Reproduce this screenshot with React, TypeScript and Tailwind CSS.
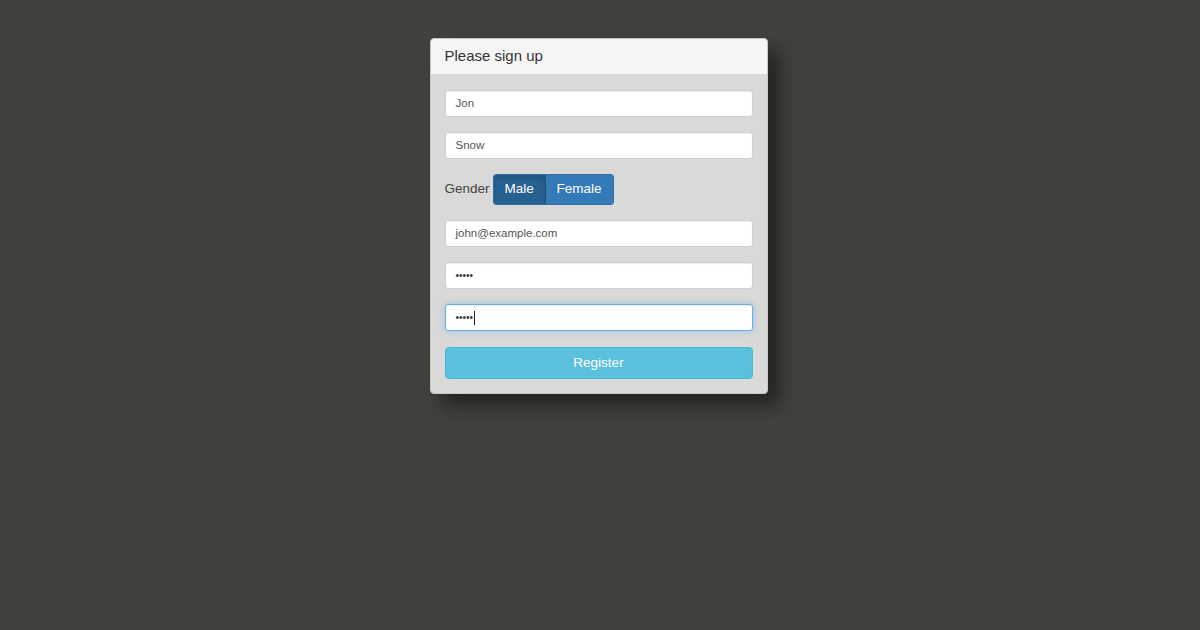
const Field = ({ value, focused, password }: { value: string; focused?: boolean; password?: boolean }) => (
  <div
    className={
      "h-[27px] rounded-[3px] bg-white flex items-center pl-[10px] text-[11.5px] text-[#555] border " +
      (focused
        ? "border-[#66afe9] shadow-[inset_0_1px_1px_rgba(0,0,0,0.075),0_0_6px_rgba(102,175,233,0.6)]"
        : "border-[#cfcfcf] shadow-[inset_0_1px_1px_rgba(0,0,0,0.075)]")
    }
  >
    {password ? (
      <span className="text-[#333] text-[10px] leading-none">{value}</span>
    ) : (
      <span>{value}</span>
    )}
    {focused && <span className="w-px h-[14px] bg-[#222] ml-[1px]" />}
  </div>
);

export default function App() {
  return (
    <div
      className="w-[1200px] h-[630px] bg-[#42413c] pt-[38px] flex justify-center items-start pr-[3px]"
      style={{ fontFamily: '"Liberation Sans", Arial, sans-serif' }}
    >
      <div className="w-[338px] rounded-[4px] bg-[#d9d9d7] border border-[#c8c8c8] overflow-hidden shadow-[12px_12px_18px_rgba(0,0,0,0.45)]">
        <div className="h-[35px] bg-[#f5f5f5] flex items-center px-[14px] text-[15px] text-[#333]">
          Please sign up
        </div>
        <div className="px-[14px] pt-[16px] pb-[14px] flex flex-col gap-[15px]">
          <Field value="Jon" />
          <Field value="Snow" />
          <div className="flex items-center h-[31px]">
            <span className="text-[13.5px] text-[#444] mr-[3px]">Gender</span>
            <div className="flex h-[31px] rounded-[3px] overflow-hidden border border-[#2e6da4]">
              <div className="w-[52px] bg-[#286090] text-white text-[13.5px] flex items-center justify-center shadow-[inset_0_3px_5px_rgba(0,0,0,0.125)] border-r border-[#204d74]">
                Male
              </div>
              <div className="w-[67px] bg-[#337ab7] text-white text-[13.5px] flex items-center justify-center">
                Female
              </div>
            </div>
          </div>
          <Field value="john@example.com" />
          <Field value="•••••" password />
          <Field value="•••••" password focused />
          <div className="h-[32px] mt-[1px] rounded-[4px] bg-[#5bc0de] border border-[#46b8da] flex items-center justify-center text-white text-[13.5px]">
            Register
          </div>
        </div>
      </div>
    </div>
  );
}
